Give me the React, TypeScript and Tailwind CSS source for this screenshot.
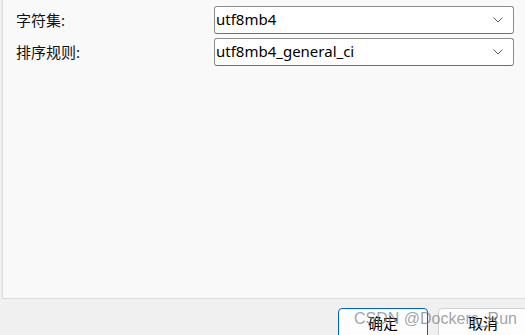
import React from 'react';

const font = { fontFamily: '"Noto Sans", "Noto Sans CJK SC", sans-serif' };

function Chevron() {
  return (
    <svg width="10" height="6" viewBox="0 0 10 6" className="shrink-0">
      <path d="M0.5 0.5 L5 5 L9.5 0.5" fill="none" stroke="#5f5f5f" strokeWidth="1" />
    </svg>
  );
}

function Select({ value }: { value: string }) {
  return (
    <div className="flex items-center justify-between w-[300px] h-[28px] pl-[1px] pr-[10px] bg-white border border-[#8d8d8d] border-b-[#6f6f6f] rounded-[3px] text-[15px] text-black leading-none">
      <span className="-mt-[1px]">{value}</span>
      <Chevron />
    </div>
  );
}

function Row({ label, value }: { label: string; value: string }) {
  return (
    <div className="flex items-center">
      <div className="w-[198px] text-[15px] text-[#111]">{label}</div>
      <Select value={value} />
    </div>
  );
}

export default function App() {
  return (
    <div className="relative w-[525px] h-[335px] bg-[#f0f0f0] overflow-hidden flex flex-col" style={font}>
      <div className="ml-[2px] h-[299px] shrink-0 bg-[#f9f9f9] border-l border-b border-[#dadada] pl-[13px] pt-[6px] flex flex-col gap-[4px]">
        <Row label="字符集:" value="utf8mb4" />
        <Row label="排序规则:" value="utf8mb4_general_ci" />
      </div>
      <div className="flex gap-[10px] pl-[338px] pt-[9px]">
        <button className="w-[90px] h-[32px] shrink-0 bg-[#fdfdfd] border border-[#0067c0] rounded-[4px] text-[15px] text-black pb-[2px]">确定</button>
        <button className="w-[90px] h-[32px] shrink-0 bg-[#fdfdfd] border border-[#d0d0d0] rounded-[4px] text-[15px] text-black pb-[2px]">取消</button>
      </div>
      <div className="absolute left-[354px] top-[311px] text-[16px] text-[#7a7a7a]/70 leading-none pointer-events-none whitespace-nowrap" style={{ fontFamily: '"Liberation Sans", Arial, sans-serif' }}>
        CSDN @Dockers_Run
      </div>
    </div>
  );
}
